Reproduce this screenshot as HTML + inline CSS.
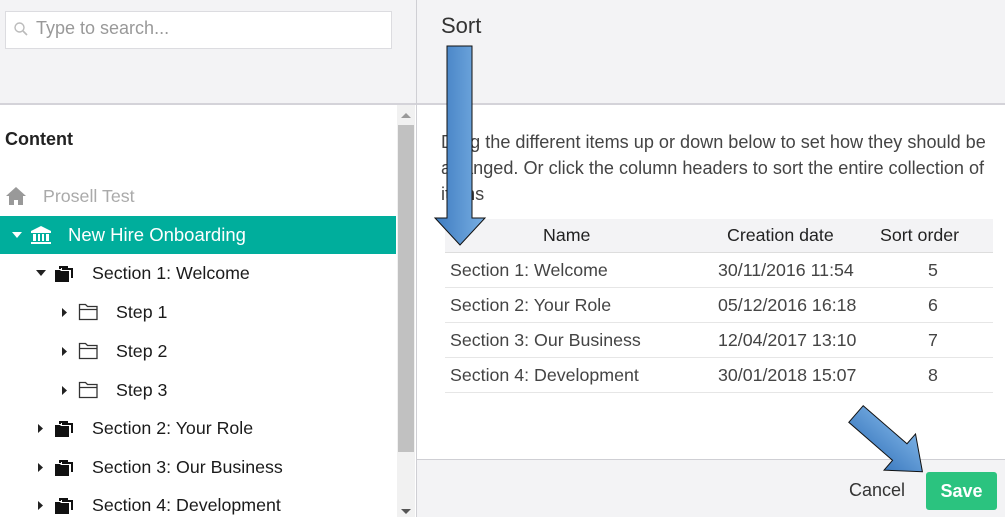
<!DOCTYPE html>
<html><head><meta charset="utf-8"><style>
*{margin:0;padding:0;box-sizing:border-box}
body{width:1005px;height:517px;overflow:hidden;position:relative;font-family:"Liberation Sans",sans-serif;background:#fff;color:#222}
.a{position:absolute;white-space:nowrap}
.t{font-size:17.8px;color:#1b1b1b}
.c{font-size:17.8px;color:#444}
.h{font-size:17.8px;color:#222}
</style></head><body>
<div class="a" style="left:0;top:0;width:417px;height:104px;background:#f3f3f5"></div>
<div class="a" style="left:417px;top:0;width:588px;height:104px;background:#f3f3f5"></div>
<div class="a" style="left:0;top:103px;width:1005px;height:2px;background:#d4d3d9"></div>
<div class="a" style="left:416px;top:0;width:1px;height:517px;background:#cfcfd4"></div>
<div class="a" style="left:5px;top:11px;width:387px;height:38px;background:#fff;border:1px solid #dcdce0"></div>
<svg class="a" style="left:13px;top:21px" width="16" height="16" viewBox="0 0 16 16"><circle cx="6.5" cy="6.5" r="4.5" fill="none" stroke="#bbb" stroke-width="1.4"/><line x1="10" y1="10" x2="14" y2="14" stroke="#bbb" stroke-width="1.6"/></svg>
<div class="a" style="left:36px;top:18px;font-size:18px;color:#999">Type to search...</div>
<div class="a" style="left:441px;top:13px;font-size:22px;color:#333">Sort</div>
<!-- scrollbar -->
<div class="a" style="left:397px;top:105px;width:18px;height:412px;background:#f1f1f1"></div>
<div class="a" style="left:398px;top:125px;width:16px;height:327px;background:#c1c1c1"></div>
<div class="a" style="left:401px;top:113px;width:0;height:0;border-left:5px solid transparent;border-right:5px solid transparent;border-bottom:5px solid #999"></div>
<div class="a" style="left:401px;top:509px;width:0;height:0;border-left:5px solid transparent;border-right:5px solid transparent;border-top:5px solid #555"></div>
<div class="a" style="left:5px;top:129px;font-size:18px;font-weight:bold;color:#222">Content</div>
<svg class="a" style="left:5px;top:186px" width="22" height="20" viewBox="0 0 22 20"><path d="M11 1L1 10h3v9h5v-5h4v5h5v-9h3z" fill="#999"/></svg>
<div class="a" style="left:43px;top:186px;font-size:17.8px;color:#aaa">Prosell Test</div>
<div class="a" style="left:0;top:216px;width:396px;height:38px;background:#00ae9c"></div>
<div class="a" style="left:12px;top:232px;border-left:5px solid transparent;border-right:5px solid transparent;border-top:6px solid #fff"></div>
<svg class="a" style="left:30px;top:225px" width="22" height="20" viewBox="0 0 22 20"><path d="M11 1L1 6v2h20V6z M3 9h3v7H3z M8 9h2v7H8z M12 9h2v7h-2z M16 9h3v7h-3z M1 17h20v2H1z" fill="#fff"/></svg>
<div class="a" style="left:68px;top:224px;font-size:18.5px;color:#fff">New Hire Onboarding</div>
<!-- tree rows -->
<div class="a" style="left:36px;top:270px;border-left:5px solid transparent;border-right:5px solid transparent;border-top:6px solid #222"></div>
<svg class="a" style="left:54px;top:265px" width="20" height="18" viewBox="0 0 20 18"><path d="M5 1h9v2H7v1H5z M8 3h11v10h-2V5H8z" fill="#111"/><path d="M1 5h5l1 1h8v11H1z" fill="#111"/></svg>
<div class="a t" style="left:92px;top:263px">Section 1: Welcome</div>
<div class="a t" style="left:116px;top:302px">Step 1</div>
<div class="a t" style="left:116px;top:341px">Step 2</div>
<div class="a t" style="left:116px;top:380px">Step 3</div>
<div class="a t" style="left:92px;top:418px">Section 2: Your Role</div>
<div class="a t" style="left:92px;top:457px">Section 3: Our Business</div>
<div class="a t" style="left:92px;top:495px">Section 4: Development</div>
<svg class="a" style="left:0;top:0" width="120" height="517">
<g fill="#222"><path d="M62 308l5 4.5-5 4.5z"/><path d="M62 347l5 4.5-5 4.5z"/><path d="M62 386l5 4.5-5 4.5z"/>
<path d="M38 424l5 4.5-5 4.5z"/><path d="M38 463l5 4.5-5 4.5z"/><path d="M38 501l5 4.5-5 4.5z"/></g>
<g fill="none" stroke="#333" stroke-width="1.3"><path d="M79.5 304.5h6l2 2h9.5v13h-17.5z M79.5 309.5h17.5"/><path d="M79.5 343.5h6l2 2h9.5v13h-17.5z M79.5 348.5h17.5"/><path d="M79.5 382.5h6l2 2h9.5v13h-17.5z M79.5 387.5h17.5"/></g>
<g fill="#111"><path d="M59 421h9v2h-7v1h-2z M62 423h11v10h-2v-8h-9z M55 425h5l1 1h8v11H55z"/><path d="M59 460h9v2h-7v1h-2z M62 462h11v10h-2v-8h-9z M55 464h5l1 1h8v11H55z"/><path d="M59 498h9v2h-7v1h-2z M62 500h11v10h-2v-8h-9z M55 502h5l1 1h8v11H55z"/></g>
</svg>
<!-- right content -->
<div class="a c" style="left:441px;top:129px;line-height:26px;font-size:18.1px">Drag the different items up or down below to set how they should be<br>arranged. Or click the column headers to sort the entire collection of<br>items</div>
<div class="a" style="left:445px;top:219px;width:548px;height:34px;background:#f3f3f5;border-bottom:1px solid #ddd"></div>
<div class="a h" style="left:543px;top:225px">Name</div>
<div class="a h" style="left:727px;top:225px">Creation date</div>
<div class="a h" style="left:880px;top:225px">Sort order</div>
<div class="a" style="left:445px;top:287px;width:548px;height:1px;background:#e6e6e6"></div>
<div class="a" style="left:445px;top:322px;width:548px;height:1px;background:#e6e6e6"></div>
<div class="a" style="left:445px;top:357px;width:548px;height:1px;background:#e6e6e6"></div>
<div class="a" style="left:445px;top:392px;width:548px;height:1px;background:#e6e6e6"></div>
<div class="a c" style="left:450px;top:260px">Section 1: Welcome</div><div class="a c" style="left:718px;top:260px">30/11/2016 11:54</div><div class="a c" style="left:928px;top:260px">5</div>
<div class="a c" style="left:450px;top:295px">Section 2: Your Role</div><div class="a c" style="left:718px;top:295px">05/12/2016 16:18</div><div class="a c" style="left:928px;top:295px">6</div>
<div class="a c" style="left:450px;top:330px">Section 3: Our Business</div><div class="a c" style="left:718px;top:330px">12/04/2017 13:10</div><div class="a c" style="left:928px;top:330px">7</div>
<div class="a c" style="left:450px;top:365px">Section 4: Development</div><div class="a c" style="left:718px;top:365px">30/01/2018 15:07</div><div class="a c" style="left:928px;top:365px">8</div>
<!-- footer -->
<div class="a" style="left:417px;top:459px;width:588px;height:58px;background:#f3f3f5;border-top:1px solid #cfcfd4"></div>
<div class="a" style="left:849px;top:480px;font-size:18px;color:#333">Cancel</div>
<div class="a" style="left:926px;top:472px;width:71px;height:38px;background:#2bc37f;border-radius:3px;color:#fff;font-weight:bold;font-size:18px;text-align:center;line-height:38px">Save</div>
<!-- arrows -->
<svg class="a" style="left:0;top:0" width="1005" height="517">
<defs><linearGradient id="g" x1="0" x2="1" y1="0" y2="0"><stop offset="0" stop-color="#3d7bc0"/><stop offset="1" stop-color="#79afe3"/></linearGradient>
<linearGradient id="g2" x1="0" x2="0" y1="0" y2="1"><stop offset="0" stop-color="#79afe3"/><stop offset="1" stop-color="#3d7bc0"/></linearGradient></defs>
<path d="M447 46H472V218H485L460 245L435 218H447Z" fill="url(#g)" stroke="#111" stroke-width="1"/>
<g transform="translate(856,414) rotate(41)"><path d="M0 -11H58V-24L88 0L58 24V11H0Z" fill="url(#g2)" stroke="#111" stroke-width="1"/></g>
</svg>
</body></html>
